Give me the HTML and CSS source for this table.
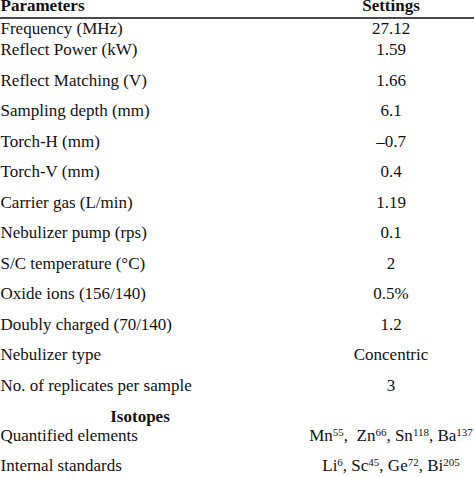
FILE: index.html
```html
<!DOCTYPE html>
<html lang="en">
<head>
<meta charset="utf-8">
<title>ICP-MS parameters</title>
<link rel="stylesheet" href="styles.css">
</head>
<body>
<div class="table">
  <div class="row head">
    <div class="param">Parameters</div>
    <div class="value"><span>Settings</span></div>
  </div>
  <div class="row first">
    <div class="param">Frequency (MHz)</div>
    <div class="value"><span>27.12</span></div>
  </div>
  <div class="row tight">
    <div class="param">Reflect Power (kW)</div>
    <div class="value"><span>1.59</span></div>
  </div>
  <div class="row">
    <div class="param">Reflect Matching (V)</div>
    <div class="value"><span>1.66</span></div>
  </div>
  <div class="row">
    <div class="param">Sampling depth (mm)</div>
    <div class="value"><span>6.1</span></div>
  </div>
  <div class="row">
    <div class="param">Torch-H (mm)</div>
    <div class="value"><span>–0.7</span></div>
  </div>
  <div class="row">
    <div class="param">Torch-V (mm)</div>
    <div class="value"><span>0.4</span></div>
  </div>
  <div class="row">
    <div class="param">Carrier gas (L/min)</div>
    <div class="value"><span>1.19</span></div>
  </div>
  <div class="row">
    <div class="param">Nebulizer pump (rps)</div>
    <div class="value"><span>0.1</span></div>
  </div>
  <div class="row">
    <div class="param">S/C temperature (°C)</div>
    <div class="value"><span>2</span></div>
  </div>
  <div class="row">
    <div class="param">Oxide ions (156/140)</div>
    <div class="value"><span>0.5%</span></div>
  </div>
  <div class="row">
    <div class="param">Doubly charged (70/140)</div>
    <div class="value"><span>1.2</span></div>
  </div>
  <div class="row">
    <div class="param">Nebulizer type</div>
    <div class="value"><span>Concentric</span></div>
  </div>
  <div class="row">
    <div class="param">No. of replicates per sample</div>
    <div class="value"><span>3</span></div>
  </div>
  <div class="row section">
    <div class="param section-title">Isotopes</div>
    <div class="value"></div>
  </div>
  <div class="row after-section">
    <div class="param">Quantified elements</div>
    <div class="value"><span>Mn<sup>55</sup>,&nbsp; Zn<sup>66</sup>, Sn<sup>118</sup>, Ba<sup>137</sup></span></div>
  </div>
  <div class="row last">
    <div class="param">Internal standards</div>
    <div class="value"><span>Li<sup>6</sup>, Sc<sup>45</sup>, Ge<sup>72</sup>, Bi<sup>205</sup></span></div>
  </div>
</div>
</body>
</html>
```

FILE: styles.css
```css
html, body {
  margin: 0;
  padding: 0;
  background: #ffffff;
}

body {
  width: 474px;
  height: 477px;
  overflow: hidden;
  font-family: "Liberation Serif", "Times New Roman", serif;
  font-size: 17px;
  color: #111111;
}

.table {
  margin-top: -4px;
  display: flex;
  flex-direction: column;
}

.row {
  display: grid;
  grid-template-columns: 280px 1fr;
  line-height: 20px;
  padding-top: 10.5px;
}

.row.head {
  padding-top: 0;
  padding-bottom: 1px;
  border-bottom: 2px solid #4a4a4a;
  font-weight: bold;
}

.row.first {
  padding-top: 0;
}

.row.tight {
  padding-top: 1px;
}

.row.section {
  padding-top: 12.5px;
  line-height: 18px;
  font-weight: bold;
}

.row.after-section {
  padding-top: 0;
}

.row.last {
  padding-top: 9.5px;
}

.param {
  white-space: nowrap;
  padding-left: 0.5px;
}

.section-title {
  text-align: center;
  padding-left: 0;
}

.value {
  display: flex;
  justify-content: center;
  white-space: nowrap;
  padding-left: 28px;
}

.value span {
  display: block;
  white-space: nowrap;
}

sup {
  font-size: 11px;
  line-height: 0;
  vertical-align: 5.5px;
}
```
